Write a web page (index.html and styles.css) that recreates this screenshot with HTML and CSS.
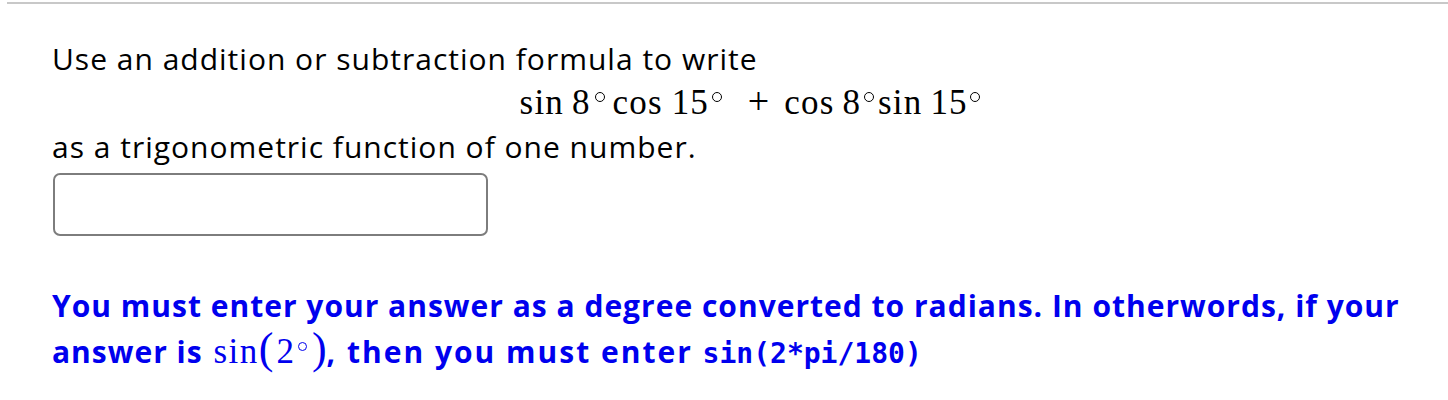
FILE: index.html
```html
<!DOCTYPE html>
<html>
<head>
<meta charset="utf-8">
<link rel="stylesheet" href="styles.css">
</head>
<body>
<div class="rule"></div>
<div class="problem">
  <p class="line first">Use an addition or subtraction formula to write</p>
  <div class="display-math"><span class="fn">sin</span><span class="num g9">8</span><span class="deg g6"></span><span class="fn g8">cos</span><span class="num g10">15</span><span class="deg g5"></span><span class="op g26">+</span><span class="fn g15">cos</span><span class="num g9">8</span><span class="deg g5"></span><span class="fn g6">sin</span><span class="num g9">15</span><span class="deg g5"></span></div>
  <p class="line">as a trigonometric function of one number.</p>
  <input class="answer" type="text" aria-label="answer">
  <p class="note">You must enter your answer as a degree converted to radians. In otherwords, if your<br>answer is <span class="imath"><span class="fn">sin</span><span class="paren">(</span><span class="num">2</span><span class="deg small"></span><span class="paren">)</span></span><span class="tail">, then you must enter </span><code>sin(2*pi/180)</code></p>
</div>
</body>
</html>
```
FILE: styles.css
```css
html, body {
  margin: 0;
  padding: 0;
  background: #fff;
}
body {
  font-family: "Open Sans", "Noto Sans", sans-serif;
  color: #000;
}
.rule {
  margin: 2px 0 0 7px;
  height: 2px;
  background: #c8c8c8;
}
.problem {
  padding-left: 52px;
}
.line {
  margin: 0;
  font-size: 30px;
  line-height: 44px;
  letter-spacing: 1px;
}
.line.first {
  margin-top: 33px;
}

/* displayed formula, centred on the page */
.display-math {
  font-family: "Liberation Serif", "DejaVu Serif", serif;
  font-size: 35px;
  line-height: 44px;
  height: 44px;
  text-align: center;
  white-space: nowrap;
}
.display-math span {
  display: inline-block;
}
.display-math .fn {
  letter-spacing: 1.2px;
}
.display-math .num {
  letter-spacing: 1px;
}
.op {
  font-size: 38px;
  line-height: 30px;
}
.g5 { margin-left: 3px; }
.g6 { margin-left: 4px; }
.g8 { margin-left: 8px; }
.g9 { margin-left: 8px; }
.g10 { margin-left: 9px; }
.g15 { margin-left: 15px; }
.g26 { margin-left: 26px; }

/* degree ring drawn as a raised circle */
.deg {
  display: inline-block;
  width: 10px;
  height: 10px;
  box-sizing: border-box;
  border: 1.8px solid currentColor;
  border-radius: 50%;
  vertical-align: 12px;
}
.deg.small {
  width: 9px;
  height: 9px;
  margin-left: 4px;
  margin-right: 5px;
  vertical-align: 12px;
}

.answer {
  display: block;
  margin: 4px 0 0 1px;
  width: 435px;
  height: 63px;
  box-sizing: border-box;
  border: 2px solid #7d7d7d;
  border-radius: 7px;
  background: #fff;
  padding: 0;
}
.note {
  margin: 47px 0 0 0;
  color: #0000ee;
  font-weight: 700;
  font-size: 30px;
  line-height: 46px;
  letter-spacing: 1px;
  white-space: nowrap;
}
.note .tail {
  letter-spacing: 2px;
}
.imath {
  font-family: "Liberation Serif", "DejaVu Serif", serif;
  font-weight: 400;
  font-size: 35px;
  letter-spacing: 0;
  margin-left: 2px;
}
.imath .fn {
  letter-spacing: 1.5px;
}
.imath .paren {
  font-size: 44px;
  line-height: 0;
}
.imath .num {
  margin-left: 3px;
}
code {
  font-family: "DejaVu Sans Mono", monospace;
  font-weight: 700;
  font-size: 28px;
  letter-spacing: 0;
  margin-left: 0;
}
```
